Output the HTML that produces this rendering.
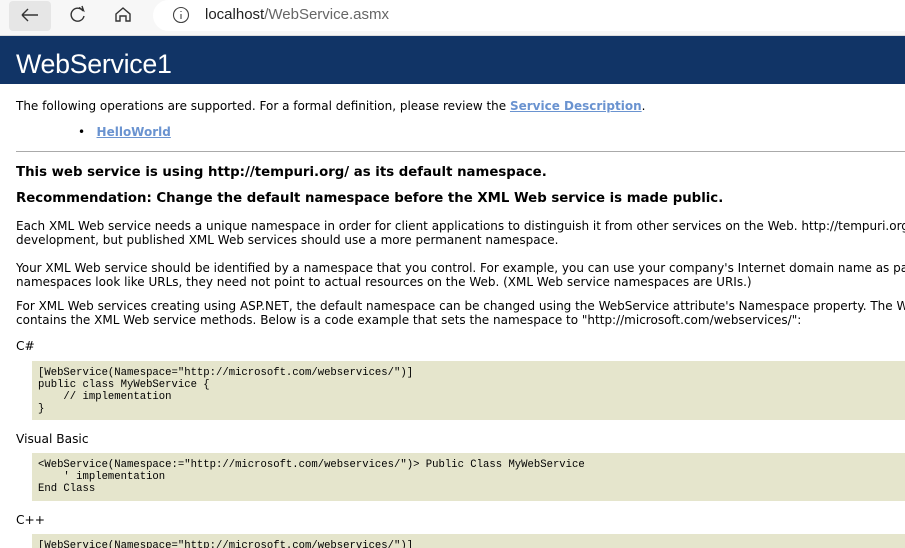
<!DOCTYPE html>
<html><head><meta charset="utf-8"><style>
html,body{margin:0;padding:0;width:905px;height:548px;overflow:hidden;background:#fff;}
#w{position:relative;width:905px;height:548px;overflow:hidden;}
.a{position:absolute;white-space:nowrap;}
.t{font-family:"DejaVu Sans","Liberation Sans",sans-serif;font-size:12px;color:#000;line-height:14px;}
.b{font-weight:bold;font-size:13.3px;}
a{color:#6a93d0;font-weight:bold;text-decoration:underline;}
.code{position:absolute;left:32px;width:873px;background:#e5e5cc;overflow:hidden;}
pre{margin:0;font-family:"Liberation Mono","Courier New",monospace;font-size:10.6px;line-height:12px;color:#000;position:absolute;left:6px;}
.h{font-family:"DejaVu Sans","Liberation Sans",sans-serif;font-size:12.2px;}
</style></head><body><div id="w">
<div class="a" style="left:0;top:0;width:905px;height:35px;background:#f7f7f7;border-bottom:1px solid #ddd;"></div>
<div class="a" style="left:9px;top:1px;width:42px;height:30px;background:#e6e6e6;border-radius:4px;"></div>
<svg class="a" style="left:0;top:0" width="160" height="35" fill="none" stroke="#333" stroke-width="1.4">
<path d="M22 15 H38 M22 15 L28 9 M22 15 L28 21"/>
<path d="M83 11 A6.5 6.5 0 1 0 84 16 M79 7.5 L83.5 10.5 L82 6"/>
<path d="M116 14 L123 8 L130 14 V21 H126 V16 H120 V21 H116 Z"/>
</svg>
<div class="a" style="left:153px;top:0px;width:752px;height:31px;background:#fff;border-radius:16px 0 0 16px;"></div>
<svg class="a" style="left:171px;top:6px" width="20" height="20" fill="none" stroke="#444" stroke-width="1.1"><circle cx="10" cy="9" r="7.5"/><path d="M10 8 V13 M10 5 V6"/></svg>
<div class="a" style="left:205px;top:6px;font-family:'Liberation Sans',sans-serif;font-size:15px;color:#222;">localhost<span style="color:#666">/WebService.asmx</span></div>
<div class="a" style="left:0;top:36px;width:905px;height:48px;background:#113466;"></div>
<div class="a" style="left:16px;top:49px;font-family:'Liberation Sans',sans-serif;font-size:26.8px;color:#fff;letter-spacing:-0.3px;">WebService1</div>
<div class="a t" style="left:16px;top:99px;">The following operations are supported. For a formal definition, please review the <a>Service Description</a>.</div>
<div class="a t" style="left:78px;top:125px;">•&nbsp;&nbsp;&nbsp;<a>HelloWorld</a></div>
<div class="a" style="left:16px;top:151px;width:889px;height:1px;background:#aaa;"></div>
<div class="a t b" style="left:16px;top:166px;">This web service is using http://tempuri.org/ as its default namespace.</div>
<div class="a t b" style="left:16px;top:192px;">Recommendation: Change the default namespace before the XML Web service is made public.</div>
<div class="a t" style="left:16px;top:219px;">Each XML Web service needs a unique namespace in order for client applications to distinguish it from other services on the Web. http://tempuri.org/<br>development, but published XML Web services should use a more permanent namespace.</div>
<div class="a t" style="left:16px;top:261px;">Your XML Web service should be identified by a namespace that you control. For example, you can use your company's Internet domain name as part<br>namespaces look like URLs, they need not point to actual resources on the Web. (XML Web service namespaces are URIs.)</div>
<div class="a t" style="left:16px;top:299px;">For XML Web services creating using ASP.NET, the default namespace can be changed using the WebService attribute's Namespace property. The WebS<br>contains the XML Web service methods. Below is a code example that sets the namespace to "http://microsoft.com/webservices/":</div>
<div class="a h" style="left:16px;top:339px;">C#</div>
<div class="code" style="top:361px;height:59px;"><pre style="top:6px;">[WebService(Namespace="http://microsoft.com/webservices/")]
public class MyWebService {
    // implementation
}</pre></div>
<div class="a h" style="left:16px;top:432px;">Visual Basic</div>
<div class="code" style="top:453px;height:48px;"><pre style="top:6px;">&lt;WebService(Namespace:="http://microsoft.com/webservices/")&gt; Public Class MyWebService
    ' implementation
End Class</pre></div>
<div class="a h" style="left:16px;top:513px;">C++</div>
<div class="code" style="top:534px;height:14px;"><pre style="top:6px;">[WebService(Namespace="http://microsoft.com/webservices/")]</pre></div>
</div></body></html>
